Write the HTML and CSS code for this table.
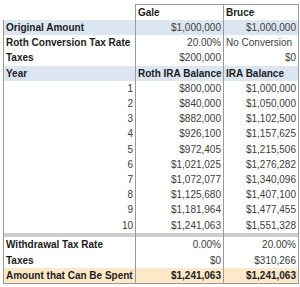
FILE: index.html
```html
<!DOCTYPE html>
<html>
<head>
<meta charset="utf-8">
<link rel="stylesheet" href="styles.css">
</head>
<body>
<table class="sheet">
  <colgroup>
    <col class="c-label">
    <col class="c-gale">
    <col class="c-bruce">
  </colgroup>
  <tr class="head">
    <td class="blank"></td>
    <td class="b">Gale</td>
    <td class="b">Bruce</td>
  </tr>
  <tr class="blue">
    <td class="b">Original Amount</td>
    <td class="n">$1,000,000</td>
    <td class="n">$1,000,000</td>
  </tr>
  <tr>
    <td class="b">Roth Conversion Tax Rate</td>
    <td class="n">20.00%</td>
    <td>No Conversion</td>
  </tr>
  <tr>
    <td class="b">Taxes</td>
    <td class="n">$200,000</td>
    <td class="n">$0</td>
  </tr>
  <tr class="blue">
    <td class="b">Year</td>
    <td class="b r">Roth IRA Balance</td>
    <td class="b">IRA Balance</td>
  </tr>
  <tr><td class="n">1</td><td class="n">$800,000</td><td class="n">$1,000,000</td></tr>
  <tr><td class="n">2</td><td class="n">$840,000</td><td class="n">$1,050,000</td></tr>
  <tr><td class="n">3</td><td class="n">$882,000</td><td class="n">$1,102,500</td></tr>
  <tr><td class="n">4</td><td class="n">$926,100</td><td class="n">$1,157,625</td></tr>
  <tr><td class="n">5</td><td class="n">$972,405</td><td class="n">$1,215,506</td></tr>
  <tr><td class="n">6</td><td class="n">$1,021,025</td><td class="n">$1,276,282</td></tr>
  <tr><td class="n">7</td><td class="n">$1,072,077</td><td class="n">$1,340,096</td></tr>
  <tr><td class="n">8</td><td class="n">$1,125,680</td><td class="n">$1,407,100</td></tr>
  <tr><td class="n">9</td><td class="n">$1,181,964</td><td class="n">$1,477,455</td></tr>
  <tr><td class="n">10</td><td class="n">$1,241,063</td><td class="n">$1,551,328</td></tr>
  <tr class="sep"><td></td><td></td><td></td></tr>
  <tr>
    <td class="b">Withdrawal Tax Rate</td>
    <td class="n">0.00%</td>
    <td class="n">20.00%</td>
  </tr>
  <tr>
    <td class="b">Taxes</td>
    <td class="n">$0</td>
    <td class="n">$310,266</td>
  </tr>
  <tr class="total">
    <td class="b">Amount that Can Be Spent</td>
    <td class="b r">$1,241,063</td>
    <td class="b r">$1,241,063</td>
  </tr>
</table>
</body>
</html>
```

FILE: styles.css
```css
html, body {
  margin: 0;
  padding: 0;
  background: #ffffff;
}

.sheet {
  margin: 4px 0 0 3px;
  border-collapse: collapse;
  table-layout: fixed;
  width: 295px;
  font-family: "Liberation Sans", Arial, sans-serif;
  font-size: 10px;
  color: #3c3c3c;
}

.c-label { width: 132px; }
.c-gale { width: 88px; }
.c-bruce { width: 75px; }

.sheet td {
  height: 15.2px;
  padding: 0 2px;
  border-left: 1px solid #9a9a9a;
  border-right: 1px solid #9a9a9a;
  white-space: nowrap;
  line-height: 15px;
  box-sizing: border-box;
}

.sheet tr:last-child td {
  border-bottom: 1px solid #9a9a9a;
}

.head td {
  border-top: 1px solid #9a9a9a;
}

.head td.blank {
  border-top: none;
  border-left: none;
}

.blue td {
  background: #dce6f2;
}

.sep td {
  height: 4.6px;
  line-height: 4px;
  background: #cdcdcd;
  padding: 0;
}

.total td {
  background: #fde9c9;
}

.b {
  font-weight: bold;
  color: #1c1c1c;
}

.n, .r {
  text-align: right;
}
```
